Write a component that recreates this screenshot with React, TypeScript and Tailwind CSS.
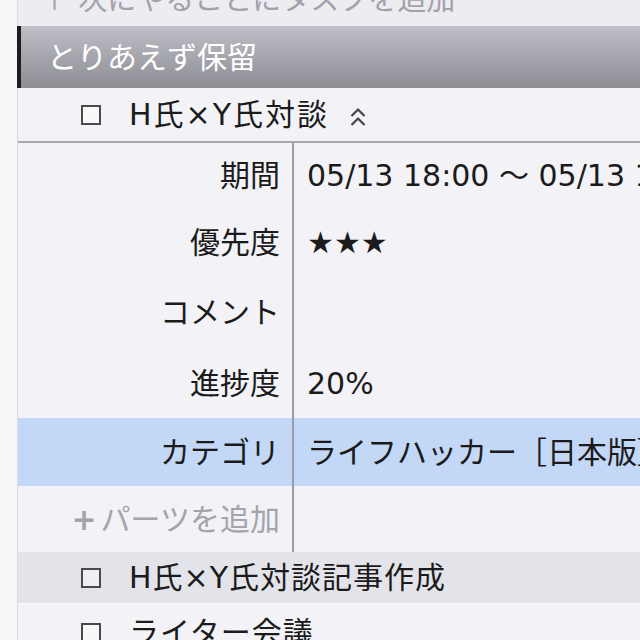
import React from "react";

const font = { fontFamily: '"DejaVu Sans", "Noto Sans CJK JP", sans-serif' };

function CheckBox() {
  return <span className="inline-block w-[20px] h-[20px] border-2 border-[#4a4a4a] bg-white/40 shrink-0" />;
}

function ChevronUp() {
  return (
    <svg width="18" height="22" viewBox="0 0 18 22" className="shrink-0">
      <path d="M2.5 10 L9 3.5 L15.5 10" fill="none" stroke="#444" strokeWidth="2.2" />
      <path d="M2.5 19 L9 12.5 L15.5 19" fill="none" stroke="#444" strokeWidth="2.2" />
    </svg>
  );
}

const rows = [
  { label: "期間", value: "05/13 18:00 ～ 05/13 19:00", h: "h-[65px]" },
  { label: "優先度", value: "★★★", h: "h-[69px]" },
  { label: "コメント", value: "", h: "h-[71px]" },
  { label: "進捗度", value: "20%", h: "h-[70px]" },
  { label: "カテゴリ", value: "ライフハッカー［日本版］", h: "h-[68px]", active: true },
];

export default function App() {
  return (
    <div className="w-[640px] h-[640px] overflow-hidden bg-[#f6f6f9] text-[#1b1b1b]" style={font}>
      <div className="ml-[17px] border-l border-[#dcdce3]">
        {/* add task row, cut at top */}
        <div className="h-[26px] bg-[#ececf1] overflow-hidden flex items-start pl-[22px] text-[#a2a2aa] text-[29px] whitespace-nowrap">
          <span className="-mt-[21px]">＋ 次にやることにタスクを追加</span>
        </div>

        {/* section header */}
        <div className="h-[62px] -ml-px border-l-4 border-[#1d1d1f] bg-gradient-to-b from-[#bebfc7] to-[#8d8e94] flex items-center pl-[26px] text-white text-[30px] whitespace-nowrap">
          とりあえず保留
        </div>

        {/* expanded task */}
        <div className="h-[55px] bg-[#f3f3f7] flex items-center pl-[63px] text-[30px] whitespace-nowrap border-b-2 border-[#a8a8b0]">
          <CheckBox />
          <span className="ml-[28px] tracking-[2px]">H氏×Y氏対談</span>
          <span className="ml-[20px] mt-[4px]">
            <ChevronUp />
          </span>
        </div>

        <div className="bg-[#f2f2f7] text-[30px] whitespace-nowrap">
          {rows.map((r) => (
            <div key={r.label} className={`flex ${r.h} ${r.active ? "bg-[#c3d8f7]" : ""}`}>
              <div className="w-[276px] shrink-0 border-r-2 border-[#9c9ca4] flex items-center justify-end pr-[12px]">
                {r.label}
              </div>
              <div className="flex items-center pl-[13px]">{r.value}</div>
            </div>
          ))}
          <div className="flex h-[66px]">
            <div className="w-[276px] shrink-0 border-r-2 border-[#9c9ca4] flex items-center justify-end pr-[12px] text-[#a4a4ac]">
              <span className="font-bold mr-[4px]">+</span>パーツを追加
            </div>
          </div>
        </div>

        <div className="h-[53px] bg-[#e3e4ea] flex items-center pl-[63px] text-[30px] whitespace-nowrap border-b-2 border-[#f7f7fa]">
          <CheckBox />
          <span className="ml-[28px] tracking-[1px]">H氏×Y氏対談記事作成</span>
        </div>
        <div className="h-[55px] bg-[#f3f3f7] flex items-center pl-[63px] text-[30px] whitespace-nowrap">
          <CheckBox />
          <span className="ml-[28px] tracking-[1px]">ライター会議</span>
        </div>
      </div>
    </div>
  );
}
